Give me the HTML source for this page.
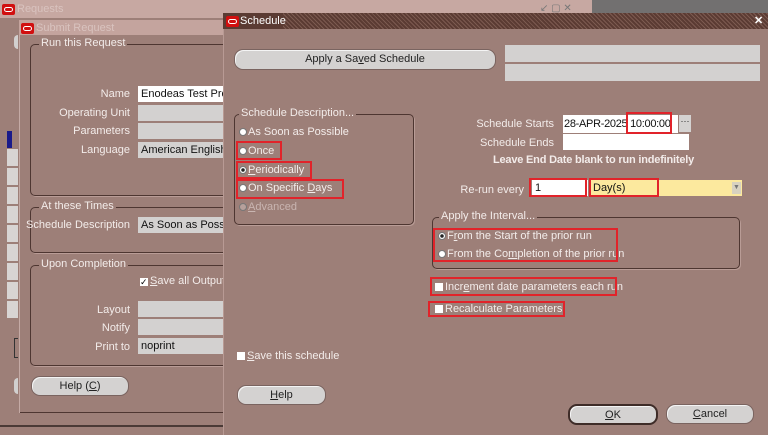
<!DOCTYPE html><html><head><style>
*{margin:0;padding:0;box-sizing:border-box}
body{width:768px;height:435px;overflow:hidden;background:#9d7f78;font-family:"Liberation Sans",sans-serif;font-size:11px;color:#f3ecea;position:relative}
.a{position:absolute}
.lbl{position:absolute;text-align:right;white-space:nowrap}
.fld{position:absolute;background:#d3d1d0;color:#111;padding:1px 3px;white-space:nowrap;overflow:hidden;height:16px;line-height:14px}
.w{background:#fff}
.frame{position:absolute;border:1px solid #4e3631;border-radius:5px;box-shadow:1px 1px 0 #b99c96}
.ft{position:absolute;top:-8px;left:8px;background:#9d7f78;padding:0 2px;white-space:nowrap}
.btn{position:absolute;background:#d4d2d1;color:#222;border-radius:9px;text-align:center;border:1px solid #7a6460;box-shadow:inset 1px 1px 0 #f4f4f4}
.red{position:absolute;border:2px solid #e1232a}
.rad{display:inline-block;width:8px;height:8px;border-radius:50%;background:#fff;vertical-align:-1px;margin-right:1px;border:1px solid #777}
.chk{display:inline-block;width:8px;height:8px;background:#fff;vertical-align:-1px;margin-right:2px}
.logo{position:absolute;width:13px;height:11px;background:#d10f0f;border-radius:2px}
.logo:after{content:"";position:absolute;left:2px;top:3px;width:9px;height:5px;border:1.5px solid #fff;border-radius:3px;box-sizing:border-box}
u{text-decoration:underline}
</style></head><body>
<div class="a" style="left:0;top:0;width:768px;height:18px;background:#c7a8a2"></div>
<div class="a" style="left:592px;top:0;width:176px;height:14px;background:#727070"></div>
<div class="logo" style="left:2px;top:4px"></div>
<div class="a" style="left:17px;top:3px;color:#d9c3bf">Requests</div>
<div class="a" style="left:540px;top:3px;color:#777;font-size:10px">↙ ▢ ✕</div>
<div class="a" style="left:7px;top:131px;width:5px;height:17px;background:#1a1a8a"></div>
<div class="a" style="left:7px;top:149px;width:11px;height:170px;background:repeating-linear-gradient(#d8d4d3 0 17px,#9d7f78 17px 19px)"></div>
<div class="a" style="left:14px;top:35px;width:4px;height:14px;background:#d2d0cf;border-radius:4px 0 0 4px"></div>
<div class="a" style="left:14px;top:338px;width:4px;height:20px;border:1px solid #333;border-right:none"></div>
<div class="a" style="left:14px;top:378px;width:4px;height:16px;background:#d2d0cf;border-radius:6px 0 0 6px"></div>
<div class="a" style="left:0;top:425px;width:230px;height:2px;background:#4a3a36"></div>
<div class="a" style="left:19px;top:20px;width:210px;height:15px;background:#c4a49e"></div>
<div class="logo" style="left:21px;top:23px"></div>
<div class="a" style="left:36px;top:22px;color:#d9c3bf">Submit Request</div>
<div class="a" style="left:19px;top:35px;width:1px;height:378px;background:#c4aaa5"></div>
<div class="a" style="left:20px;top:412px;width:210px;height:1px;background:#4e3631"></div>
<div class="frame" style="left:30px;top:44px;width:210px;height:152px"><span class="ft">Run this Request</span></div>
<div class="lbl" style="right:638px;top:88px">Name</div>
<div class="lbl" style="right:638px;top:107px">Operating Unit</div>
<div class="lbl" style="right:638px;top:125px">Parameters</div>
<div class="lbl" style="right:638px;top:144px">Language</div>
<div class="fld w" style="left:138px;top:86px;width:90px">Enodeas Test Program</div>
<div class="fld" style="left:138px;top:105px;width:90px"></div>
<div class="fld" style="left:138px;top:123px;width:90px"></div>
<div class="fld" style="left:138px;top:142px;width:90px">American English</div>
<div class="frame" style="left:30px;top:207px;width:210px;height:46px"><span class="ft">At these Times</span></div>
<div class="lbl" style="right:638px;top:219px">Schedule Description</div>
<div class="fld" style="left:138px;top:217px;width:90px">As Soon as Possible</div>
<div class="frame" style="left:30px;top:265px;width:210px;height:101px"><span class="ft">Upon Completion</span></div>
<div class="a" style="left:140px;top:275px;white-space:nowrap"><span class="chk" style="background:#fff;color:#000;font-size:9px;line-height:8px">✓</span><u>S</u>ave all Output File</div>
<div class="lbl" style="right:638px;top:304px">Layout</div>
<div class="lbl" style="right:638px;top:322px">Notify</div>
<div class="lbl" style="right:638px;top:341px">Print to</div>
<div class="fld" style="left:138px;top:301px;width:90px"></div>
<div class="fld" style="left:138px;top:319px;width:90px"></div>
<div class="fld" style="left:138px;top:338px;width:90px">noprint</div>
<div class="btn" style="left:31px;top:376px;width:98px;height:20px;line-height:18px">Help (<u>C</u>)</div>
<div class="a" style="left:223px;top:13px;width:545px;height:422px;background:#9d7f78;border-left:1px solid #b89a94"></div>
<div class="a" style="left:223px;top:13px;width:545px;height:16px;background:#5b3b33 repeating-linear-gradient(45deg,transparent 0 2px,#7c5a50 2px 3px)"></div>
<div class="a" style="left:223px;top:13px;width:60px;height:16px;background:#5b3b33"></div>
<div class="logo" style="left:226px;top:16px"></div>
<div class="a" style="left:240px;top:15px;color:#fff;font-size:11px">Schedule</div>
<div class="a" style="left:754px;top:14px;color:#fff;font-weight:bold">✕</div>
<div class="btn" style="left:234px;top:49px;width:262px;height:21px;line-height:19px">Apply a Sa<u>v</u>ed Schedule</div>
<div class="fld" style="left:505px;top:45px;width:255px;height:17px"></div>
<div class="fld" style="left:505px;top:64px;width:255px;height:17px"></div>
<div class="frame" style="left:234px;top:114px;width:180px;height:111px"><span class="ft" style="left:4px">Schedule Description...</span></div>
<div class="a" style="left:239px;top:126px"><span class="rad"></span>As Soon as Possible</div>
<div class="a" style="left:239px;top:145px"><span class="rad"></span>Once</div>
<div class="a" style="left:239px;top:164px"><span class="rad" style="background:radial-gradient(#222 40%,#fff 45%)"></span><u>P</u>eriodically</div>
<div class="a" style="left:239px;top:182px"><span class="rad"></span>On Specific <u>D</u>ays</div>
<div class="a" style="left:239px;top:201px;color:#c9b5b1"><span class="rad" style="background:#b7a09b"></span><u>A</u>dvanced</div>
<div class="red" style="left:236px;top:141px;width:46px;height:19px"></div>
<div class="red" style="left:236px;top:161px;width:76px;height:18px"></div>
<div class="red" style="left:236px;top:179px;width:108px;height:20px"></div>
<div class="lbl" style="right:214px;top:118px">Schedule Starts</div>
<div class="lbl" style="right:214px;top:137px">Schedule Ends</div>
<div class="fld w" style="left:563px;top:115px;width:115px;height:18px;padding:1px 1px;line-height:16px;letter-spacing:-0.3px">28-APR-2025 10:00:00</div>
<div class="red" style="left:626px;top:112px;width:46px;height:22px"></div>
<div class="a" style="left:679px;top:115px;width:12px;height:17px;background:#d4d2d1;color:#222;text-align:center;line-height:12px;font-size:9px">···</div>
<div class="fld w" style="left:563px;top:134px;width:126px;height:16px"></div>
<div class="a" style="left:493px;top:154px;font-weight:bold;letter-spacing:-0.2px">Leave End Date blank to run indefinitely</div>
<div class="lbl" style="right:244px;top:184px">Re-run every</div>
<div class="fld w" style="left:532px;top:180px;width:56px">1</div>
<div class="fld" style="left:590px;top:180px;width:152px;background:#fce99e">Day(s)</div>
<div class="a" style="left:732px;top:182px;width:9px;height:12px;background:#d8d2c0;color:#777;font-size:7px;text-align:center;line-height:12px">▼</div>
<div class="red" style="left:529px;top:178px;width:58px;height:19px"></div>
<div class="red" style="left:589px;top:178px;width:70px;height:19px"></div>
<div class="frame" style="left:432px;top:217px;width:308px;height:52px"><span class="ft" style="left:6px">Apply the Interval...</span></div>
<div class="a" style="left:438px;top:230px"><span class="rad" style="background:radial-gradient(#222 40%,#fff 45%)"></span>F<u>r</u>om the Start of the prior run</div>
<div class="a" style="left:438px;top:248px"><span class="rad"></span>From the Co<u>m</u>pletion of the prior run</div>
<div class="red" style="left:433px;top:228px;width:185px;height:34px"></div>
<div class="a" style="left:435px;top:281px"><span class="chk"></span>Incr<u>e</u>ment date parameters each run</div>
<div class="red" style="left:430px;top:277px;width:187px;height:19px"></div>
<div class="a" style="left:435px;top:303px"><span class="chk"></span>Recalculate Parameters</div>
<div class="red" style="left:428px;top:301px;width:137px;height:16px"></div>
<div class="a" style="left:237px;top:350px"><span class="chk"></span><u>S</u>ave this schedule</div>
<div class="btn" style="left:237px;top:385px;width:89px;height:20px;line-height:18px"><u>H</u>elp</div>
<div class="btn" style="left:568px;top:404px;width:90px;height:21px;line-height:19px;border:2px solid #3e2c28"><u>O</u>K</div>
<div class="btn" style="left:666px;top:404px;width:88px;height:20px;line-height:18px"><u>C</u>ancel</div>
</body></html>
